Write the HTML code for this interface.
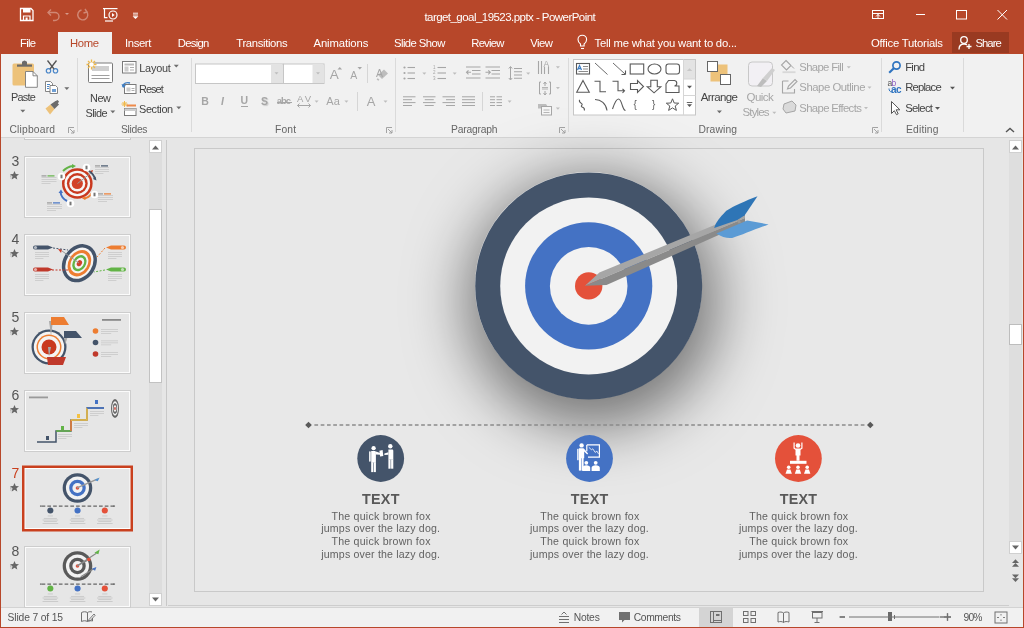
<!DOCTYPE html><html><head><meta charset="utf-8"><style>
html,body{margin:0;padding:0;width:1024px;height:628px;overflow:hidden;background:#E6E6E6;position:relative}
.t{position:absolute;white-space:nowrap;line-height:1;font-family:"Liberation Sans",sans-serif}
.r{position:absolute}
svg{position:absolute;overflow:visible}
</style></head><body>
<div class="r" style="left:0px;top:0px;width:1024px;height:54px;background:#B7472A;"></div>
<div class="r" style="left:0px;top:54px;width:1024px;height:83px;background:#F1F1F1;"></div>
<div class="r" style="left:0px;top:138px;width:167px;height:469px;background:#E6E6E6;"></div>
<div class="r" style="left:167px;top:138px;width:857px;height:469px;background:#E6E6E6;"></div>
<div class="r" style="left:0px;top:137px;width:1024px;height:1px;background:#D4D4D4;"></div>
<div class="r" style="left:0px;top:608px;width:1024px;height:20px;background:#F1F1F1;"></div>
<div class="r" style="left:0px;top:607px;width:1024px;height:1px;background:#D3D3D3;"></div>
<div class="r" style="left:168px;top:605px;width:841px;height:1px;background:#CDCDCD;"></div>
<div class="r" style="left:58px;top:32px;width:54px;height:22px;background:#F1F1F1;"></div>
<svg width="167" height="606" style="left:0;top:0"><rect x="24" y="138" width="107" height="2" fill="#C9C9C9"/><rect x="25" y="138" width="105" height="1" fill="#FAFAFA"/><rect x="24" y="156" width="107" height="62" fill="#CDCDCD"/><rect x="25" y="157" width="105" height="60" fill="#FBFBFB"/><rect x="26" y="158" width="103" height="58" fill="#E6E6E6"/><g transform="translate(24 156)"><circle cx="53.3" cy="27.5" r="15.3" fill="#C9391F"/><circle cx="53.3" cy="27.5" r="12.8" fill="#F6F6F6"/><circle cx="53.3" cy="27.5" r="10.4" fill="#C9391F"/><circle cx="53.3" cy="27.5" r="8" fill="#F6F6F6"/><circle cx="53.3" cy="27.5" r="5.6" fill="#D2432A"/><path d="M53.5 27.5L67 17" stroke="#999" stroke-width="1"/><path d="M66 15l3-1-1 3z" fill="#C9391F"/><path d="M39 15c3-3 6-4.5 10-5" stroke="#62B346" stroke-width="2" fill="none"/><path d="M48 8l4 2-4 2.5z" fill="#62B346"/><path d="M65 15c3 2 5 4 6 8" stroke="#44546A" stroke-width="2" fill="none"/><path d="M69 23l3.5 1.5-1-4z" fill="#44546A"/><path d="M68 37c-2 3-4 5-8 5.5" stroke="#ED7D31" stroke-width="2" fill="none"/><path d="M61 40l-3 2.5 3.5 1.5z" fill="#ED7D31"/><path d="M43 45c-4-2-6-5-6.5-9" stroke="#4472C4" stroke-width="2" fill="none"/><path d="M34.5 37l2.5-3.5 2 3.5z" fill="#4472C4"/><circle cx="37.5" cy="20.5" r="3.8" fill="#FFFFFF"/><rect x="36.5" y="18.7" width="2" height="3.6" fill="#777"/><circle cx="62.5" cy="11.5" r="3.8" fill="#FFFFFF"/><rect x="61.5" y="9.7" width="2" height="3.6" fill="#777"/><circle cx="70.5" cy="38.5" r="3.8" fill="#FFFFFF"/><rect x="69.5" y="36.7" width="2" height="3.6" fill="#777"/><circle cx="46.5" cy="47.5" r="3.8" fill="#FFFFFF"/><rect x="45.5" y="45.7" width="2" height="3.6" fill="#777"/><rect x="17.5" y="21" width="15" height="0.75" fill="#C6C6C6"/><rect x="17.5" y="23" width="15" height="0.75" fill="#C6C6C6"/><rect x="17.5" y="25" width="15" height="0.75" fill="#C6C6C6"/><rect x="17.5" y="27" width="9.0" height="0.75" fill="#C6C6C6"/><rect x="71" y="11" width="14" height="0.75" fill="#C6C6C6"/><rect x="71" y="13" width="14" height="0.75" fill="#C6C6C6"/><rect x="71" y="15" width="14" height="0.75" fill="#C6C6C6"/><rect x="71" y="17" width="8.4" height="0.75" fill="#C6C6C6"/><rect x="74" y="39" width="15" height="0.75" fill="#C6C6C6"/><rect x="74" y="41" width="15" height="0.75" fill="#C6C6C6"/><rect x="74" y="43" width="15" height="0.75" fill="#C6C6C6"/><rect x="74" y="45" width="9.0" height="0.75" fill="#C6C6C6"/><rect x="23" y="48" width="15" height="0.75" fill="#C6C6C6"/><rect x="23" y="50" width="15" height="0.75" fill="#C6C6C6"/><rect x="23" y="52" width="15" height="0.75" fill="#C6C6C6"/><rect x="23" y="54" width="9.0" height="0.75" fill="#C6C6C6"/><rect x="17.5" y="19.3" width="5" height="1.2" fill="#999"/><rect x="23.5" y="19.3" width="7" height="1.2" fill="#62B346"/><rect x="71" y="9.3" width="5" height="1.2" fill="#999"/><rect x="77" y="9.3" width="7" height="1.2" fill="#44546A"/><rect x="74" y="37.3" width="5" height="1.2" fill="#999"/><rect x="80" y="37.3" width="7" height="1.2" fill="#ED7D31"/><rect x="23" y="46.3" width="5" height="1.2" fill="#999"/><rect x="29" y="46.3" width="7" height="1.2" fill="#4472C4"/></g><rect x="24" y="234" width="107" height="62" fill="#CDCDCD"/><rect x="25" y="235" width="105" height="60" fill="#FBFBFB"/><rect x="26" y="236" width="103" height="58" fill="#E6E6E6"/><g transform="translate(24 234)"><g transform="rotate(-58 55.4 29.2)"><ellipse cx="55.4" cy="29.2" rx="20" ry="16.5" fill="#44546A"/><ellipse cx="55.4" cy="29.2" rx="16.5" ry="13" fill="#F4F4F4"/><ellipse cx="55.4" cy="29.2" rx="14" ry="10.8" fill="#ED7D31"/><ellipse cx="55.4" cy="29.2" rx="10.8" ry="8.2" fill="#F4F4F4"/><ellipse cx="55.4" cy="29.2" rx="8.6" ry="6.5" fill="#62B346"/><ellipse cx="55.4" cy="29.2" rx="6" ry="4.3" fill="#F4F4F4"/><ellipse cx="55.4" cy="29.2" rx="3.2" ry="2.4" fill="#D0402B"/></g><path d="M55 29L38 17" stroke="#999" stroke-width="1"/><path d="M34 15l4 0.5-1 3.5z" fill="#D0402B"/><path d="M11 11.5h13l5 2-5 2h-13a2 2 0 0 1 0-4z" fill="#44546A"/><circle cx="11.5" cy="13.5" r="1.6" fill="#fff" opacity="0.6"/><rect x="11" y="18.0" width="14" height="0.75" fill="#C6C6C6"/><rect x="11" y="20.0" width="14" height="0.75" fill="#C6C6C6"/><rect x="11" y="22.0" width="14" height="0.75" fill="#C6C6C6"/><rect x="11" y="24.0" width="8.4" height="0.75" fill="#C6C6C6"/><path d="M11 33.5h13l5 2-5 2h-13a2 2 0 0 1 0-4z" fill="#C0392B"/><circle cx="11.5" cy="35.5" r="1.6" fill="#fff" opacity="0.6"/><rect x="11" y="40.0" width="14" height="0.75" fill="#C6C6C6"/><rect x="11" y="42.0" width="14" height="0.75" fill="#C6C6C6"/><rect x="11" y="44.0" width="14" height="0.75" fill="#C6C6C6"/><rect x="11" y="46.0" width="8.4" height="0.75" fill="#C6C6C6"/><path d="M100 11.5h-13l-5 2 5 2h13a2 2 0 0 0 0-4z" fill="#ED7D31"/><circle cx="98.5" cy="13.5" r="1.6" fill="#fff" opacity="0.6"/><rect x="84" y="18.0" width="14" height="0.75" fill="#C6C6C6"/><rect x="84" y="20.0" width="14" height="0.75" fill="#C6C6C6"/><rect x="84" y="22.0" width="14" height="0.75" fill="#C6C6C6"/><rect x="84" y="24.0" width="8.4" height="0.75" fill="#C6C6C6"/><path d="M100 33.5h-13l-5 2 5 2h13a2 2 0 0 0 0-4z" fill="#62B346"/><circle cx="98.5" cy="35.5" r="1.6" fill="#fff" opacity="0.6"/><rect x="84" y="40.0" width="14" height="0.75" fill="#C6C6C6"/><rect x="84" y="42.0" width="14" height="0.75" fill="#C6C6C6"/><rect x="84" y="44.0" width="14" height="0.75" fill="#C6C6C6"/><rect x="84" y="46.0" width="8.4" height="0.75" fill="#C6C6C6"/><path d="M29 14L44 16" stroke="#44546A" stroke-width="1" stroke-dasharray="2 1.5"/><path d="M28 36L44 36" stroke="#C0392B" stroke-width="1" stroke-dasharray="2 1.5"/><path d="M81 14L73 23" stroke="#ED7D31" stroke-width="1" stroke-dasharray="2 1.5"/><path d="M81 36L70 38" stroke="#62B346" stroke-width="1" stroke-dasharray="2 1.5"/></g><rect x="24" y="312" width="107" height="62" fill="#CDCDCD"/><rect x="25" y="313" width="105" height="60" fill="#FBFBFB"/><rect x="26" y="314" width="103" height="58" fill="#E6E6E6"/><g transform="translate(24 312)"><circle cx="25" cy="35" r="17.5" fill="#44546A"/><circle cx="25" cy="35" r="15.2" fill="#F4F4F4"/><circle cx="25" cy="35" r="12.5" fill="#ED7D31"/><circle cx="25" cy="35" r="11" fill="#F4F4F4"/><circle cx="25" cy="35" r="7.5" fill="#C9391F"/><path d="M25 9L27 24 29 9z" fill="#A8A8A8"/><path d="M40 24L41 33 44 24z" fill="#A8A8A8"/><path d="M24 35L25 45 27 35z" fill="#A8A8A8"/><path d="M27 5h13l5 8h-18z" fill="#ED7D31"/><path d="M40 19h12l6 7h-18z" fill="#44546A"/><path d="M23 45h19l-3 8h-15z" fill="#C0392B"/><rect x="78" y="7" width="19" height="1.8" fill="#8A8A8A"/><circle cx="71.5" cy="19.0" r="2.8" fill="#ED7D31"/><rect x="77" y="17.0" width="17" height="0.75" fill="#C6C6C6"/><rect x="77" y="19.0" width="17" height="0.75" fill="#C6C6C6"/><rect x="77" y="21.0" width="10.2" height="0.75" fill="#C6C6C6"/><circle cx="71.5" cy="30.5" r="2.8" fill="#44546A"/><rect x="77" y="28.5" width="17" height="0.75" fill="#C6C6C6"/><rect x="77" y="30.5" width="17" height="0.75" fill="#C6C6C6"/><rect x="77" y="32.5" width="10.2" height="0.75" fill="#C6C6C6"/><circle cx="71.5" cy="42.0" r="2.8" fill="#C0392B"/><rect x="77" y="40.0" width="17" height="0.75" fill="#C6C6C6"/><rect x="77" y="42.0" width="17" height="0.75" fill="#C6C6C6"/><rect x="77" y="44.0" width="10.2" height="0.75" fill="#C6C6C6"/></g><rect x="24" y="390" width="107" height="62" fill="#CDCDCD"/><rect x="25" y="391" width="105" height="60" fill="#FBFBFB"/><rect x="26" y="392" width="103" height="58" fill="#E6E6E6"/><g transform="translate(24 390)"><rect x="5" y="6.5" width="19" height="1.8" fill="#9A9A9A"/><path d="M13 52H32V41H47V30H63V18H80" fill="none" stroke="#44546A" stroke-width="1.5"/><path d="M32 41H47" stroke="#62B346" stroke-width="1.5"/><path d="M47 41V30" stroke="#ED7D31" stroke-width="1.5"/><path d="M47 30H63V18" stroke="#F4C142" stroke-width="1.5" fill="none"/><path d="M63 18H80" stroke="#4472C4" stroke-width="1.5"/><ellipse cx="91" cy="18.5" rx="4.0" ry="9.5" fill="#666"/><ellipse cx="91" cy="18.5" rx="3.04" ry="7.22" fill="#F4F4F4"/><ellipse cx="91" cy="18.5" rx="2.2399999999999998" ry="5.319999999999999" fill="#666"/><ellipse cx="91" cy="18.5" rx="1.36" ry="3.23" fill="#F4F4F4"/><ellipse cx="91" cy="18.5" rx="0.7200000000000001" ry="1.71" fill="#C0392B"/><rect x="22" y="46" width="3" height="4" fill="#44546A"/><rect x="37" y="36" width="3" height="4" fill="#62B346"/><rect x="53" y="24" width="3" height="4" fill="#F4C142"/><rect x="71" y="10" width="3" height="4" fill="#4472C4"/><rect x="34" y="44" width="14" height="0.75" fill="#C6C6C6"/><rect x="34" y="46" width="14" height="0.75" fill="#C6C6C6"/><rect x="34" y="48" width="8.4" height="0.75" fill="#C6C6C6"/><rect x="50" y="33" width="14" height="0.75" fill="#C6C6C6"/><rect x="50" y="35" width="14" height="0.75" fill="#C6C6C6"/><rect x="50" y="37" width="8.4" height="0.75" fill="#C6C6C6"/><rect x="66" y="21" width="14" height="0.75" fill="#C6C6C6"/><rect x="66" y="23" width="14" height="0.75" fill="#C6C6C6"/><rect x="66" y="25" width="8.4" height="0.75" fill="#C6C6C6"/></g><rect x="22" y="465.5" width="111" height="66" fill="#C9401E"/><rect x="24.5" y="468" width="106" height="61" fill="#FFFFFF"/><rect x="25.5" y="469" width="104" height="59" fill="#E6E6E6"/><g transform="translate(26 470) scale(0.13037974683544304)"><circle cx="394.7" cy="137.9" r="113.5" fill="#44546A"/><circle cx="394.7" cy="137.9" r="88.5" fill="#F2F2F2"/><circle cx="394.7" cy="137.9" r="63.6" fill="#4472C4"/><circle cx="394.7" cy="137.9" r="38.8" fill="#F2F2F2"/><circle cx="394.7" cy="137.9" r="13.7" fill="#E4513A"/><path d="M391 137.8L551 68" stroke="#999" stroke-width="10"/><path d="M525 77l40-20-15 30z" fill="#4E8FD0"/><path d="M120 277H675" stroke="#666" stroke-width="8" stroke-dasharray="28 16"/><path d="M114 271l8 6-8 6-8-6z" fill="#555"/><path d="M676 271l8 6-8 6-8-6z" fill="#555"/><circle cx="186.7" cy="310.5" r="23.4" fill="#44546A"/><rect x="166.7" y="350" width="40" height="5" fill="#BDBDBD"/><rect x="136.7" y="368" width="100" height="5" fill="#BDBDBD"/><rect x="126.69999999999999" y="381" width="120" height="5" fill="#BDBDBD"/><rect x="136.7" y="394" width="100" height="5" fill="#BDBDBD"/><rect x="126.69999999999999" y="407" width="120" height="5" fill="#BDBDBD"/><circle cx="395.5" cy="310.5" r="23.4" fill="#4472C4"/><rect x="375.5" y="350" width="40" height="5" fill="#BDBDBD"/><rect x="345.5" y="368" width="100" height="5" fill="#BDBDBD"/><rect x="335.5" y="381" width="120" height="5" fill="#BDBDBD"/><rect x="345.5" y="394" width="100" height="5" fill="#BDBDBD"/><rect x="335.5" y="407" width="120" height="5" fill="#BDBDBD"/><circle cx="604.4" cy="310.5" r="23.4" fill="#E4513A"/><rect x="584.4" y="350" width="40" height="5" fill="#BDBDBD"/><rect x="554.4" y="368" width="100" height="5" fill="#BDBDBD"/><rect x="544.4" y="381" width="120" height="5" fill="#BDBDBD"/><rect x="554.4" y="394" width="100" height="5" fill="#BDBDBD"/><rect x="544.4" y="407" width="120" height="5" fill="#BDBDBD"/></g><rect x="24" y="546" width="107" height="62" fill="#CDCDCD"/><rect x="25" y="547" width="105" height="60" fill="#FBFBFB"/><rect x="26" y="548" width="103" height="58" fill="#E6E6E6"/><g transform="translate(26 548) scale(0.13037974683544304)"><circle cx="394.7" cy="137.9" r="113.5" fill="#595959"/><circle cx="394.7" cy="137.9" r="88.5" fill="#F2F2F2"/><circle cx="394.7" cy="137.9" r="63.6" fill="#595959"/><circle cx="394.7" cy="137.9" r="38.8" fill="#F2F2F2"/><circle cx="394.7" cy="137.9" r="13.7" fill="#E4513A"/><path d="M391 137.8L540 40" stroke="#888" stroke-width="9"/><path d="M525 37l40-25-10 35z" fill="#62B346"/><path d="M391 137.8L470 95" stroke="#888" stroke-width="9"/><circle cx="482" cy="88" r="14" fill="#E4513A"/><path d="M420 220L520 160" stroke="#888" stroke-width="9"/><path d="M505 160l35-15-10 30z" fill="#4472C4"/><path d="M120 277H675" stroke="#666" stroke-width="8" stroke-dasharray="28 16"/><path d="M114 271l8 6-8 6-8-6z" fill="#555"/><path d="M676 271l8 6-8 6-8-6z" fill="#555"/><circle cx="186.7" cy="310.5" r="23.4" fill="#62B346"/><rect x="166.7" y="350" width="40" height="5" fill="#BDBDBD"/><rect x="136.7" y="368" width="100" height="5" fill="#BDBDBD"/><rect x="126.69999999999999" y="381" width="120" height="5" fill="#BDBDBD"/><rect x="136.7" y="394" width="100" height="5" fill="#BDBDBD"/><rect x="126.69999999999999" y="407" width="120" height="5" fill="#BDBDBD"/><circle cx="395.5" cy="310.5" r="23.4" fill="#4472C4"/><rect x="375.5" y="350" width="40" height="5" fill="#BDBDBD"/><rect x="345.5" y="368" width="100" height="5" fill="#BDBDBD"/><rect x="335.5" y="381" width="120" height="5" fill="#BDBDBD"/><rect x="345.5" y="394" width="100" height="5" fill="#BDBDBD"/><rect x="335.5" y="407" width="120" height="5" fill="#BDBDBD"/><circle cx="604.4" cy="310.5" r="23.4" fill="#E4513A"/><rect x="584.4" y="350" width="40" height="5" fill="#BDBDBD"/><rect x="554.4" y="368" width="100" height="5" fill="#BDBDBD"/><rect x="544.4" y="381" width="120" height="5" fill="#BDBDBD"/><rect x="554.4" y="394" width="100" height="5" fill="#BDBDBD"/><rect x="544.4" y="407" width="120" height="5" fill="#BDBDBD"/></g></svg>
<div class="r" style="left:149px;top:140px;width:13px;height:465px;background:#DDDDDD;"></div>
<div class="r" style="left:149px;top:140px;width:13px;height:13px;background:#FFFFFF;border:1px solid #D0D0D0;box-sizing:border-box"></div>
<div class="r" style="left:149px;top:209px;width:13px;height:174px;background:#FFFFFF;border:1px solid #C2C2C2;box-sizing:border-box"></div>
<div class="r" style="left:149px;top:593px;width:13px;height:13px;background:#FFFFFF;border:1px solid #D0D0D0;box-sizing:border-box"></div>
<div class="r" style="left:166px;top:140px;width:1px;height:466px;background:#C8C8C8;"></div>
<div class="r" style="left:194px;top:148px;width:788px;height:442px;background:#E8E8E8;border:1px solid #C9C9C9"></div>
<div class="r" style="left:475px;top:172px;width:227px;height:227px;border-radius:50%;box-shadow:4px 16px 60px 12px rgba(0,0,0,0.5)"></div>
<svg width="1024" height="628" style="left:0;top:0"><circle cx="588.7" cy="285.9" r="113.5" fill="#44546A"/><circle cx="588.7" cy="285.9" r="88.5" fill="#F2F2F2"/><circle cx="588.7" cy="285.9" r="63.6" fill="#4472C4"/><circle cx="588.7" cy="285.9" r="38.8" fill="#F2F2F2"/><circle cx="588.7" cy="285.9" r="13.7" fill="#E4513A"/><path d="M585 285.8 L599.4 272.5 L745 212.5 L745 218 Z" fill="#A6A6A6"/><path d="M585 285.8 L745 218 L745 223.3 L606.5 285 Z" fill="#8A8A8A"/><path d="M714.2 227.9 C716 222 719 218.3 726.3 210.7 C734 206 745 201 757.5 196.3 L744.7 215.2 L737.4 219.9 Z" fill="#2E75B6"/><path d="M716.4 233.5 C722 237 727 238.5 732.2 237.9 C742 235 755 229 768.6 224.4 L747.1 220.4 Z" fill="#5B9BD5"/><path d="M737 220.2 L739.5 219.3 L741 222.5 L738.5 223.6 Z" fill="#9A9A9A"/><path d="M314.4 425H866" stroke="#8A8A8A" stroke-width="1.6" stroke-dasharray="3.7 2.58"/><path d="M308.5 421.7l3.3 3.3-3.3 3.3-3.3-3.3z" fill="#595959"/><path d="M870.3 421.7l3.3 3.3-3.3 3.3-3.3-3.3z" fill="#595959"/><circle cx="380.7" cy="458.5" r="23.4" fill="#44546A"/><circle cx="589.5" cy="458.5" r="23.4" fill="#4472C4"/><circle cx="798.4" cy="458.5" r="23.4" fill="#E4513A"/><g transform="translate(357 435)" fill="#fff"><circle cx="16.6" cy="13.2" r="2.15"/><rect x="12.1" y="16.2" width="1.6" height="10.5" rx="0.7"/><path d="M14.2 16h3.2c1 0 1.5 .5 1.5 1.3V27.5h-4.7z"/><rect x="14.2" y="27.2" width="2.1" height="9.9"/><rect x="16.8" y="27.2" width="2.1" height="9.9"/><path d="M18.9 16.4l4.3 1.6v1.7l-4.3 -.3z"/><path d="M22.4 15.7l3.2-.6.7 5.9-3.2.6z"/><circle cx="33.3" cy="11.2" r="2.2"/><path d="M31.4 14.6h3.6c.8 0 1.3 .5 1.3 1.3v8.6h-4.9z"/><rect x="31.4" y="24.3" width="2.2" height="9.4"/><rect x="34.1" y="24.3" width="2.2" height="9.4"/><path d="M31.4 17.2l-4 1.2v1.7l4 -.3z"/></g><g transform="translate(566 435)" fill="#fff"><circle cx="15.6" cy="10.4" r="2.2"/><path d="M12.8 13.3h4.2c.8 0 1.2 .4 1.5 1l3.6 4.3-.9 .8-3-2.8v6.7h-5.2v-8.8z"/><rect x="11.2" y="13.8" width="1.4" height="11.5" rx="0.6"/><rect x="12.9" y="22.8" width="2.1" height="12.8"/><rect x="15.5" y="22.8" width="2.1" height="12.8"/><path d="M20.8 9.9h12.6v12.3h-11.4" fill="none" stroke="#fff" stroke-width="1.2"/><path d="M20.8 9.9v6.3" fill="none" stroke="#fff" stroke-width="1.2"/><path d="M22.8 12.3l2.6 2.4 1.4-.9 2.4 3.6 1.7-1.3 1.6 2.8" fill="none" stroke="#fff" stroke-width="0.8"/><circle cx="20.3" cy="27.8" r="1.9"/><path d="M16.4 36v-3.2c0-1.5 1.6-2.5 3.9-2.5s3.9 1 3.9 2.5V36z"/><circle cx="29.7" cy="27.8" r="1.9"/><path d="M25.6 36v-3.2c0-1.5 1.7-2.5 4.1-2.5s4.1 1 4.1 2.5V36z"/></g><g transform="translate(775 435)" fill="#fff"><circle cx="23" cy="10.5" r="2.3"/><path d="M20.5 13.5h5v7h-1v5.2h-3v-5.2h-1z"/><path d="M18.5 7.5h1.2v5.5l1.5 1-0.6 1-2.1-1.5z"/><path d="M27.5 7.5h-1.2v5.5l-1.5 1 0.6 1 2.1-1.5z"/><rect x="15" y="25.8" width="16.5" height="3"/><circle cx="13.7" cy="32.3" r="1.8"/><path d="M10.5 38.8l1.5-4.2h3.4l1.5 4.2z"/><circle cx="23" cy="32.3" r="1.8"/><path d="M19.8 38.8l1.5-4.2h3.4l1.5 4.2z"/><circle cx="32.2" cy="32.3" r="1.8"/><path d="M29 38.8l1.5-4.2h3.4l1.5 4.2z"/></g></svg>
<div class="r" style="left:952px;top:32px;width:57px;height:21px;background:#993A21;"></div>
<div class="r" style="left:77px;top:58px;width:1px;height:74px;background:#DADADA;"></div>
<div class="r" style="left:191px;top:58px;width:1px;height:74px;background:#DADADA;"></div>
<div class="r" style="left:395px;top:58px;width:1px;height:74px;background:#DADADA;"></div>
<div class="r" style="left:568px;top:58px;width:1px;height:74px;background:#DADADA;"></div>
<div class="r" style="left:881px;top:58px;width:1px;height:74px;background:#DADADA;"></div>
<div class="r" style="left:963px;top:58px;width:1px;height:74px;background:#DADADA;"></div>
<div class="r" style="left:699px;top:607px;width:34px;height:20px;background:#D4D4D4;"></div>
<div class="r" style="left:887.8px;top:612px;width:3.8px;height:9.4px;background:#6A6A6A;"></div>
<div class="r" style="left:1009px;top:140px;width:13px;height:465px;background:#DEDEDE;"></div>
<div class="r" style="left:1009px;top:140px;width:13px;height:13px;background:#FFFFFF;border:1px solid #D0D0D0;box-sizing:border-box"></div>
<div class="r" style="left:1009px;top:324px;width:13px;height:21px;background:#FFFFFF;border:1px solid #BDBDBD;box-sizing:border-box"></div>
<div class="r" style="left:1009px;top:541px;width:13px;height:13px;background:#FFFFFF;border:1px solid #D0D0D0;box-sizing:border-box"></div>
<div class="r" style="left:1009px;top:554px;width:13px;height:51px;background:#E6E6E6;"></div>
<div class="r" style="left:0px;top:54px;width:1px;height:574px;background:#B7472A;"></div>
<div class="r" style="left:1023px;top:54px;width:1px;height:574px;background:#B7472A;"></div>
<div class="r" style="left:0px;top:627px;width:1024px;height:1px;background:#B7472A;"></div>
<div class="r" style="left:367px;top:64px;width:1px;height:19px;background:#D6D6D6;"></div>
<div class="r" style="left:240.5px;top:106px;width:7.5px;height:1px;background:#A6A6A6;"></div>
<div class="r" style="left:276.5px;top:101.5px;width:15px;height:1px;background:#A6A6A6;"></div>
<div class="r" style="left:357px;top:91.5px;width:1px;height:19px;background:#D6D6D6;"></div>
<div class="r" style="left:482px;top:91.7px;width:1px;height:19px;background:#D6D6D6;"></div><svg width="1024" height="628" style="left:0;top:0"><path d="M14.5 171l1.3 3 3.2.2-2.5 2.1.8 3.1-2.8-1.7-2.8 1.7.8-3.1-2.5-2.1 3.2-.2z" fill="#666"/>
<path d="M10 176h1.5M10.5 178h1" stroke="#888" stroke-width="0.8"/>
<path d="M14.5 249l1.3 3 3.2.2-2.5 2.1.8 3.1-2.8-1.7-2.8 1.7.8-3.1-2.5-2.1 3.2-.2z" fill="#666"/>
<path d="M10 254h1.5M10.5 256h1" stroke="#888" stroke-width="0.8"/>
<path d="M14.5 327l1.3 3 3.2.2-2.5 2.1.8 3.1-2.8-1.7-2.8 1.7.8-3.1-2.5-2.1 3.2-.2z" fill="#666"/>
<path d="M10 332h1.5M10.5 334h1" stroke="#888" stroke-width="0.8"/>
<path d="M14.5 405l1.3 3 3.2.2-2.5 2.1.8 3.1-2.8-1.7-2.8 1.7.8-3.1-2.5-2.1 3.2-.2z" fill="#666"/>
<path d="M10 410h1.5M10.5 412h1" stroke="#888" stroke-width="0.8"/>
<path d="M14.5 483l1.3 3 3.2.2-2.5 2.1.8 3.1-2.8-1.7-2.8 1.7.8-3.1-2.5-2.1 3.2-.2z" fill="#666"/>
<path d="M10 488h1.5M10.5 490h1" stroke="#888" stroke-width="0.8"/>
<path d="M14.5 561l1.3 3 3.2.2-2.5 2.1.8 3.1-2.8-1.7-2.8 1.7.8-3.1-2.5-2.1 3.2-.2z" fill="#666"/>
<path d="M10 566h1.5M10.5 568h1" stroke="#888" stroke-width="0.8"/>
<path d="M152 149.5h7l-3.5-4z" fill="#666"/><path d="M152 597.5h7l-3.5 4z" fill="#666"/>
<path d="M81.5 612.5c2-1 4-1 6 0v9c-2-1-4-1-6 0z" fill="none" stroke="#707070" stroke-width="1"/><path d="M87.5 612.5c1.5-1 3-1 4.5-.5M87.5 621.5c1.5-1 3-1 5-.5v-3" fill="none" stroke="#707070" stroke-width="1"/><path d="M89 619.5l5-5.5 1.2 1.2-5 5.5-1.7.5z" fill="none" stroke="#707070" stroke-width="0.9"/>
<path d="M559 616.5h10M559 619.5h10M559 622.5h10" stroke="#707070" stroke-width="1"/><path d="M561.5 614.5l2.5-2.5 2.5 2.5" fill="none" stroke="#707070" stroke-width="1"/>
<path d="M619 612h11v8h-5.5l-2.5 2.5v-2.5h-3z" fill="#707070"/>
<rect x="710.5" y="611.5" width="11" height="11" fill="none" stroke="#707070" stroke-width="1"/><path d="M713.5 611.5v11M713.5 620.5h8" stroke="#707070" stroke-width="1"/><rect x="716" y="614" width="3.5" height="2" fill="#707070"/>
<g fill="none" stroke="#707070" stroke-width="1"><rect x="743.5" y="611.5" width="4.5" height="4"/><rect x="751" y="611.5" width="4.5" height="4"/><rect x="743.5" y="618.5" width="4.5" height="4"/><rect x="751" y="618.5" width="4.5" height="4"/></g>
<g fill="none" stroke="#707070" stroke-width="1"><path d="M778 612.5c2-.7 4-.7 5.5.5 1.5-1.2 3.5-1.2 5.5-.5v9.5c-2-.7-4-.7-5.5.5-1.5-1.2-3.5-1.2-5.5-.5z"/><path d="M783.5 613v9.5"/></g>
<g fill="none" stroke="#707070" stroke-width="1"><path d="M811.5 611.5h11.5"/><rect x="812.5" y="612.5" width="9.5" height="5.5"/><path d="M817 618v4.5M814.5 622.5h5"/></g>
<path d="M840 617h5M849 617h90.5M894.5 615v4M944 617h7M947.5 613.5v7" stroke="#707070" stroke-width="1"/>
<path d="M940 617h11" stroke="#707070" stroke-width="1.4"/><path d="M947.5 613.2v7.6" stroke="#707070" stroke-width="1.4"/><path d="M839.5 617h5.5" stroke="#707070" stroke-width="1.4"/>
<rect x="995" y="612" width="12" height="11" fill="none" stroke="#707070" stroke-width="1"/><path d="M997 617.5h2M1003 617.5h2M1001 614v1.5M1001 619.5v1.5" stroke="#707070" stroke-width="0.9"/>
<path d="M1012 149.5h7l-3.5-4z" fill="#666"/><path d="M1012 545.5h7l-3.5 4z" fill="#666"/>
<path d="M1012 563h7l-3.5-3.8z" fill="#666"/><path d="M1012 566.8h7l-3.5-3.8z" fill="#666"/>
<path d="M1012 574.5h7l-3.5 3.8z" fill="#666"/><path d="M1012 578.2h7l-3.5 3.8z" fill="#666"/>
<path d="M20.5 8.5h10.5l2 2v10h-12.5z" fill="none" stroke="#fff" stroke-width="1.3"/>
<rect x="23" y="9" width="7.5" height="3.5" fill="#fff"/>
<path d="M23.5 20.5v-4.5h6.5v4.5" fill="none" stroke="#fff" stroke-width="1.2"/><rect x="25.6" y="17.5" width="2" height="2.5" fill="#fff"/>
<g opacity="0.35" stroke="#fff" stroke-width="1.4" fill="none"><path d="M48 12.5h7a4 4 0 0 1 0 8h-2"/><path d="M51 9.5l-3 3 3 3"/></g>
<path d="M65 13h4l-2 2z" fill="#fff" opacity="0.45"/>
<g opacity="0.35" stroke="#fff" stroke-width="1.4" fill="none"><path d="M86.5 11.5a5 5 0 1 1 -5 -1.5"/><path d="M85 9l2 3-3.5 1"/></g>
<g stroke="#fff" fill="none" stroke-width="1.2"><path d="M103 8.6h14.5"/><path d="M104.5 8.6v9h3"/><circle cx="113" cy="15" r="4"/><path d="M105 21h8"/></g>
<path d="M112 13l2.6 2-2.6 2z" fill="#fff"/>
<path d="M133 13.2h5M133 15h5" stroke="#fff" stroke-width="0.9"/><path d="M132.6 16.3h5.8l-2.9 2.7z" fill="#fff"/>
<g stroke="#fff" fill="none" stroke-width="1"><rect x="872.5" y="10.5" width="11" height="8"/><path d="M872.5 13.5h11M878 13.5v5"/><path d="M916 14.5h9"/><rect x="956.5" y="10.5" width="10" height="8.5"/><path d="M997.5 10l9.5 9.5M1007 10l-9.5 9.5"/></g>
<path d="M876 16.5l2-2 2 2" stroke="#fff" fill="none" stroke-width="1"/>
<g stroke="#fff" fill="none" stroke-width="1.3"><circle cx="964" cy="40" r="3.3"/><path d="M959 49.5c0-4 2-5.5 5-5.5 1.3 0 2.3.3 3 .8"/><path d="M966.5 46.5h5M969 44v5"/></g>
<g stroke="#fff" fill="none" stroke-width="1.1"><path d="M580.5 46v-2c-1.5-1-2.5-2.5-2.5-4.5a4.3 4.3 0 0 1 8.6 0c0 2-1 3.5-2.5 4.5v2z"/><path d="M581 48.5h3"/></g>
<rect x="12.5" y="63.5" width="21.5" height="22" rx="1.5" fill="#EDC27A"/>
<path d="M17 64.5h15v2.2h-15z" fill="#6B6B6B"/><path d="M22 61.5h5v3.5h-5z" fill="#6B6B6B"/><circle cx="24.5" cy="62" r="1.6" fill="#6B6B6B"/>
<path d="M25.5 71.5h7.5l4.3 4.3v11.5h-11.8z" fill="#fff" stroke="#7A7A7A" stroke-width="0.9"/><path d="M33 71.5v4.3h4.3" fill="none" stroke="#7A7A7A" stroke-width="0.9"/>
<path d="M20.3 109.8h5l-2.5 2.75z" fill="#6E6E6E"/>
<g fill="none" stroke="#4A86C8" stroke-width="1.2"><circle cx="48.5" cy="70.8" r="2.2"/><circle cx="55.5" cy="70.8" r="2.2"/></g>
<path d="M47.5 60.5l6.5 8.5M56.5 60.5l-6.5 8.5" stroke="#555" stroke-width="1.3"/>
<path d="M45.5 81.5h5l2 2v8h-7z" fill="#fff" stroke="#777" stroke-width="0.9"/><path d="M50 85.5h5.5l2 2v6h-7.5z" fill="#fff" stroke="#777" stroke-width="0.9"/>
<path d="M47 84.5h3M47 86.5h2M47 88.5h2" stroke="#4A86C8" stroke-width="1"/><rect x="52" y="89" width="4" height="3" fill="#4A86C8" opacity="0.8"/>
<path d="M64.3 87.3h5l-2.5 2.75z" fill="#6E6E6E"/>
<path d="M45.5 108.5l5-4 4 4.5-4.5 5.5z" fill="#EDC27A"/><path d="M50.5 104.5l5-3.5 3.5 3.5-4.5 4.5z" fill="#6B6B6B"/><path d="M55 101.5l2.5-1.5 1.5 1.5-1.5 2.5z" fill="#6B6B6B"/>
<rect x="88.5" y="63" width="24" height="19.5" rx="1" fill="#fff" stroke="#7A7A7A" stroke-width="1"/>
<rect x="92" y="66" width="17" height="5" fill="#CFCFCF"/><path d="M91.5 75.5h18M91.5 78.5h18" stroke="#888" stroke-width="0.8"/>
<g stroke="#F0B94A" stroke-width="1.3"><path d="M91.5 59.5v10M86.5 64.5h10M88 61l7 7M95 61l-7 7"/></g><circle cx="91.5" cy="64.5" r="2.2" fill="#fff"/>
<path d="M110.3 110.39999999999999h5l-2.5 2.75z" fill="#6E6E6E"/>
<rect x="122.5" y="61.5" width="13.5" height="11.5" fill="#fff" stroke="#7A7A7A" stroke-width="1"/><rect x="124.5" y="63.5" width="9.5" height="2" fill="#bbb"/><rect x="124.5" y="66.5" width="4" height="5" fill="#ccc"/><path d="M130 67.5h4M130 70h4" stroke="#999" stroke-width="0.8"/>
<path d="M173.8 64.8h5l-2.5 2.75z" fill="#6E6E6E"/>
<rect x="124.5" y="84.5" width="11.5" height="9" fill="#fff" stroke="#7A7A7A" stroke-width="1"/><rect x="126.5" y="87.5" width="4" height="4" fill="#ccc"/><path d="M131.5 88.5h3M131.5 90.5h3" stroke="#999" stroke-width="0.8"/>
<path d="M122.5 86.5c1-3 4-4.5 7.5-3.5" stroke="#3F7FC4" stroke-width="1.4" fill="none"/><path d="M121.5 84l1.5 4 3-2.5z" fill="#3F7FC4"/>
<rect x="127" y="104.5" width="9" height="2" fill="#EE8A4A"/><path d="M127 104.5v2" stroke="#EE8A4A"/><rect x="124.5" y="108.5" width="11.5" height="7" fill="#fff" stroke="#7A7A7A" stroke-width="1"/><rect x="124.5" y="108.5" width="11.5" height="2.5" fill="#ccc"/>
<g stroke="#F0B94A" stroke-width="1"><path d="M124.5 101v6M121.5 104h6M122.5 102l4 4M126.5 102l-4 4"/></g>
<path d="M176.3 106.6h5l-2.5 2.75z" fill="#6E6E6E"/>
<rect x="195.5" y="64" width="87.5" height="19.5" fill="#fff" stroke="#C6C6C6" stroke-width="1"/>
<rect x="271" y="64.5" width="11.5" height="18.5" fill="#E3E3E3"/>
<rect x="283.5" y="64" width="40.5" height="19.5" fill="#fff" stroke="#C6C6C6" stroke-width="1"/>
<rect x="312.5" y="64.5" width="11" height="18.5" fill="#E3E3E3"/>
<path d="M274.5 72.3h4l-2.0 2.2z" fill="#BDBDBD"/>
<path d="M316.0 72.3h4l-2.0 2.2z" fill="#BDBDBD"/>
<path d="M337.5 69.5l2.3-2.5 2.3 2.5z" fill="#A6A6A6"/>
<path d="M357.5 67h4.5l-2.2 2.5z" fill="#A6A6A6"/>
<path d="M378 75l6-5.5 4 4-6 5.5z" fill="#BDBDBD"/><path d="M377 79l2 1" stroke="#BDBDBD" stroke-width="1.5"/>
<path d="M297.5 105.5h13M299.5 103.5l-2 2 2 2M308.5 103.5l2 2-2 2" stroke="#A6A6A6" fill="none" stroke-width="1"/>
<path d="M314.6 100.6h4l-2.0 2.2z" fill="#BDBDBD"/>
<path d="M344.4 100.6h4l-2.0 2.2z" fill="#BDBDBD"/>
<path d="M383.5 100.6h4l-2.0 2.2z" fill="#BDBDBD"/>
<circle cx="404.5" cy="67.5" r="1.1" fill="#A6A6A6"/>
<path d="M407.5 67.5h7.5" stroke="#A6A6A6" stroke-width="1.1"/>
<circle cx="404.5" cy="73.0" r="1.1" fill="#A6A6A6"/>
<path d="M407.5 73.0h7.5" stroke="#A6A6A6" stroke-width="1.1"/>
<circle cx="404.5" cy="78.5" r="1.1" fill="#A6A6A6"/>
<path d="M407.5 78.5h7.5" stroke="#A6A6A6" stroke-width="1.1"/>
<path d="M422.3 72.6h4l-2.0 2.2z" fill="#BDBDBD"/>
<path d="M437.5 67.5h8.5" stroke="#A6A6A6" stroke-width="1.1"/>
<path d="M437.5 73.0h8.5" stroke="#A6A6A6" stroke-width="1.1"/>
<path d="M437.5 78.5h8.5" stroke="#A6A6A6" stroke-width="1.1"/>
<path d="M452.7 72.6h4l-2.0 2.2z" fill="#BDBDBD"/>
<path d="M466 67h14.5M472 70.5h8.5M472 74h8.5M466 78h14.5" stroke="#A6A6A6" stroke-width="1.1"/><path d="M466.5 72.3h4.5M468.5 70.3l-2 2 2 2" stroke="#A6A6A6" fill="none" stroke-width="1.1"/>
<path d="M485.5 67h14.5M491.5 70.5h8.5M491.5 74h8.5M485.5 78h14.5" stroke="#A6A6A6" stroke-width="1.1"/><path d="M485.5 72.3h4.5M488.3 70.3l2 2-2 2" stroke="#A6A6A6" fill="none" stroke-width="1.1"/>
<path d="M514 68.5h8M514 71.8h8M514 75h8M514 78.2h8" stroke="#A6A6A6" stroke-width="1.1"/><path d="M510.5 67v12.5M508.8 68.5l1.7-2 1.7 2M508.8 78l1.7 2 1.7-2" stroke="#A6A6A6" fill="none" stroke-width="1"/>
<path d="M526.2 72.6h4l-2.0 2.2z" fill="#BDBDBD"/>
<path d="M403 96.8h12.5" stroke="#A6A6A6" stroke-width="1"/>
<path d="M403 99.7h9" stroke="#A6A6A6" stroke-width="1"/>
<path d="M403 102.6h12.5" stroke="#A6A6A6" stroke-width="1"/>
<path d="M403 105.5h9" stroke="#A6A6A6" stroke-width="1"/>
<path d="M423.0 96.8h12.5" stroke="#A6A6A6" stroke-width="1"/>
<path d="M424.75 99.7h9" stroke="#A6A6A6" stroke-width="1"/>
<path d="M423.0 102.6h12.5" stroke="#A6A6A6" stroke-width="1"/>
<path d="M424.75 105.5h9" stroke="#A6A6A6" stroke-width="1"/>
<path d="M442.5 96.8h12.5" stroke="#A6A6A6" stroke-width="1"/>
<path d="M446.0 99.7h9" stroke="#A6A6A6" stroke-width="1"/>
<path d="M442.5 102.6h12.5" stroke="#A6A6A6" stroke-width="1"/>
<path d="M446.0 105.5h9" stroke="#A6A6A6" stroke-width="1"/>
<path d="M462 96.8h13" stroke="#A6A6A6" stroke-width="1"/>
<path d="M462 99.7h13" stroke="#A6A6A6" stroke-width="1"/>
<path d="M462 102.6h13" stroke="#A6A6A6" stroke-width="1"/>
<path d="M462 105.5h13" stroke="#A6A6A6" stroke-width="1"/>
<path d="M490 96.8h5M496.5 96.8h5.5" stroke="#A6A6A6" stroke-width="1"/>
<path d="M490 99.7h5M496.5 99.7h5.5" stroke="#A6A6A6" stroke-width="1"/>
<path d="M490 102.6h5M496.5 102.6h5.5" stroke="#A6A6A6" stroke-width="1"/>
<path d="M490 105.5h5M496.5 105.5h5.5" stroke="#A6A6A6" stroke-width="1"/>
<path d="M507.6 100.6h4l-2.0 2.2z" fill="#BDBDBD"/>
<path d="M538.5 61v13M541.5 61v13M544.5 67v7M548.5 67v7" stroke="#A6A6A6" stroke-width="1.1"/>
<path d="M555.9 66.3h4l-2.0 2.2z" fill="#BDBDBD"/>
<path d="M539.5 82v12h1.5M539.5 82h1.5M550.5 82v12h-1.5M550.5 82h-1.5" stroke="#A6A6A6" fill="none" stroke-width="1"/><path d="M542 87.5h6M542 89h6" stroke="#A6A6A6" stroke-width="0.8"/><path d="M545 82v4M543.5 84l1.5-2 1.5 2M545 95v-4M543.5 93l1.5 2 1.5-2" stroke="#A6A6A6" fill="none" stroke-width="1"/>
<path d="M555.9 87.1h4l-2.0 2.2z" fill="#BDBDBD"/>
<path d="M538 104h8l3 4.5h-11z" fill="#BDBDBD"/><rect x="541.5" y="106.5" width="10" height="8.5" fill="#F6F6F6" stroke="#A6A6A6" stroke-width="1"/><path d="M543.5 110h6M543.5 112.5h6" stroke="#A6A6A6" stroke-width="0.8"/>
<path d="M555.9 107.5h4l-2.0 2.2z" fill="#BDBDBD"/>
<rect x="573.5" y="59.5" width="122" height="55.5" fill="#fff" stroke="#C6C6C6" stroke-width="1"/>
<rect x="683.5" y="60" width="11.5" height="19" fill="#E3E3E3"/><path d="M683.5 59.5v55.5M683.5 79h12M683.5 95.5h12" stroke="#D6D6D6" stroke-width="1"/>
<path d="M686.8 71h5.5l-2.75-2.8z" fill="#C8C8C8"/>
<path d="M687.0 85.8h5l-2.5 2.75z" fill="#555"/>
<path d="M686.8 102.5h5.5" stroke="#555" stroke-width="0.9"/>
<path d="M687.0 104.3h5l-2.5 2.75z" fill="#555"/>
<rect x="576.5" y="63.5" width="13" height="10.5" fill="#fff" stroke="#5A5A5A" stroke-width="1.1"/><path d="M583 66.5h5M583 69h5M578.5 71.5h9.5" stroke="#5A5A5A" stroke-width="0.7"/>
<path d="M577.5 70l2-4.5 2 4.5M578.2 68.6h2.6" stroke="#3F7FC4" fill="none" stroke-width="1.2"/>
<path d="M595 63l12.5 11.5" stroke="#5A5A5A" stroke-width="0.9"/>
<path d="M613 63l12 11" stroke="#5A5A5A" stroke-width="0.9"/><path d="M625.5 74.5v-4M625.5 74.5h-4" stroke="#5A5A5A" stroke-width="1.1" fill="none"/>
<rect x="630.2" y="64" width="13.5" height="10" fill="none" stroke="#5A5A5A" stroke-width="1.1"/>
<ellipse cx="654.5" cy="69" rx="6.5" ry="5" fill="none" stroke="#5A5A5A" stroke-width="1.1"/>
<rect x="666" y="64" width="13.5" height="10" rx="2.5" fill="none" stroke="#5A5A5A" stroke-width="1.1"/>
<path d="M583 80.5l6.3 11.8h-12.6z" fill="none" stroke="#5A5A5A" stroke-width="1.1"/>
<path d="M594.5 81.3h5.5v10.5h6" fill="none" stroke="#5A5A5A" stroke-width="1.1"/>
<path d="M612.5 81.3h5.5v9.5h6.5M622.5 88.8l2 2-2 2" fill="none" stroke="#5A5A5A" stroke-width="1.1"/>
<path d="M630.5 83.5h7v-3l6 6-6 6v-3h-7z" fill="none" stroke="#5A5A5A" stroke-width="1.1"/>
<path d="M650.8 80.3h6.5v6.5h3.5l-6.75 6-6.75-6h3.5z" fill="none" stroke="#5A5A5A" stroke-width="1.1"/>
<path d="M666 84l2.5-3.5h6a2.8 2.8 0 0 1 0 5.5h4.5v6.5h-13z" fill="none" stroke="#5A5A5A" stroke-width="1.1"/>
<path d="M580 100c-2 1 1 3 2 4s-2 2 0 3 3 1 2.3 3.5" fill="none" stroke="#5A5A5A" stroke-width="1.1"/>
<path d="M595 99.5c6 0 11 4 12 11" fill="none" stroke="#5A5A5A" stroke-width="1.1"/>
<path d="M612.5 109c2-6 4-10 6-10s3 4 4 7 2 4.5 3 4.5" fill="none" stroke="#5A5A5A" stroke-width="1.1"/>
<path d="M672.5 98.8l1.7 4.2 4.5.2-3.5 2.8 1.2 4.4-3.9-2.5-3.9 2.5 1.2-4.4-3.5-2.8 4.5-.2z" fill="none" stroke="#5A5A5A" stroke-width="1"/>
<rect x="710.5" y="64.5" width="17" height="17" fill="#EDC27A"/>
<rect x="707.5" y="61.5" width="10" height="10" fill="#fff" stroke="#666" stroke-width="1"/>
<rect x="720.5" y="74.5" width="10" height="10" fill="#fff" stroke="#666" stroke-width="1"/>
<path d="M716.9 110.5h5l-2.5 2.75z" fill="#6E6E6E"/>
<rect x="748.5" y="62" width="24" height="24" rx="3.5" fill="#F2F0F4" stroke="#C8C8C8" stroke-width="1"/>
<path d="M757 86l6-8 4 3-6 6z" fill="#BDBDBD"/><path d="M763 78l9-10 3 2-8 11z" fill="#CFCFCF"/>
<path d="M772.3 111.8h4l-2.0 2.2z" fill="#BDBDBD"/>
<path d="M786 60.5l5 5-4.5 4.5-5-5z" fill="none" stroke="#A6A6A6" stroke-width="1.1"/><path d="M791.5 66l2.5 2.5" stroke="#A6A6A6"/><rect x="782.5" y="71.3" width="13" height="1.8" fill="#D8D8D8"/>
<path d="M846.8 66.3h4l-2.0 2.2z" fill="#BDBDBD"/>
<path d="M782.5 81v12h12v-4M782.5 81h6" fill="none" stroke="#A6A6A6" stroke-width="1.1"/><path d="M787.5 89l1-3 6.5-6.5 2 2-6.5 6.5z" fill="none" stroke="#A6A6A6" stroke-width="1.1"/>
<path d="M867.5 86.6h4l-2.0 2.2z" fill="#BDBDBD"/>
<path d="M784 104l8-3 4 4-1 6-9 2-3-4z" fill="#DADADA" stroke="#A6A6A6" stroke-width="1"/>
<path d="M864.0 107.1h4l-2.0 2.2z" fill="#BDBDBD"/>
<circle cx="896.5" cy="65.5" r="3.6" fill="none" stroke="#2F74C0" stroke-width="1.7"/><path d="M893.8 68.3l-4.6 4.4" stroke="#2F74C0" stroke-width="2.2"/>
<path d="M889 88.5c0 2 1 3.5 3 3.5" fill="none" stroke="#2F74C0" stroke-width="1"/>
<path d="M950.0 86.8h5l-2.5 2.75z" fill="#555"/>
<path d="M891.5 101.5v12l2.8-2.8 2.2 4 1.7-.9-2.1-4h3.8z" fill="#fff" stroke="#555" stroke-width="1"/>
<path d="M935.0 107.1h5l-2.5 2.75z" fill="#555"/>
<path d="M68.5 133v-5.5h5.5" fill="none" stroke="#9A9A9A" stroke-width="0.9"/><path d="M70 129l4 4M74 130v3h-3" fill="none" stroke="#9A9A9A" stroke-width="0.9"/>
<path d="M386.5 133v-5.5h5.5" fill="none" stroke="#9A9A9A" stroke-width="0.9"/><path d="M388 129l4 4M392 130v3h-3" fill="none" stroke="#9A9A9A" stroke-width="0.9"/>
<path d="M559.5 133v-5.5h5.5" fill="none" stroke="#9A9A9A" stroke-width="0.9"/><path d="M561 129l4 4M565 130v3h-3" fill="none" stroke="#9A9A9A" stroke-width="0.9"/>
<path d="M872.5 133v-5.5h5.5" fill="none" stroke="#9A9A9A" stroke-width="0.9"/><path d="M874 129l4 4M878 130v3h-3" fill="none" stroke="#9A9A9A" stroke-width="0.9"/>
<path d="M1006 132l4-3.5 4 3.5" fill="none" stroke="#555" stroke-width="1.4"/></svg>
<div style="position:absolute;left:0;top:0;width:1024px;height:628px;will-change:transform"><div class="t" style="left:11.50px;top:154.35px;font-size:14px;letter-spacing:0.000px;color:#555;font-weight:normal;">3</div>
<div class="t" style="left:11.50px;top:232.35px;font-size:14px;letter-spacing:0.000px;color:#555;font-weight:normal;">4</div>
<div class="t" style="left:11.50px;top:310.35px;font-size:14px;letter-spacing:0.000px;color:#555;font-weight:normal;">5</div>
<div class="t" style="left:11.50px;top:388.35px;font-size:14px;letter-spacing:0.000px;color:#555;font-weight:normal;">6</div>
<div class="t" style="left:11.50px;top:466.35px;font-size:14px;letter-spacing:0.000px;color:#C9401E;font-weight:normal;">7</div>
<div class="t" style="left:11.50px;top:544.35px;font-size:14px;letter-spacing:0.000px;color:#555;font-weight:normal;">8</div>
<div class="t" style="left:362.00px;top:491.80px;font-size:14.3px;letter-spacing:0.285px;color:#595959;font-weight:bold;">TEXT</div>
<div class="t" style="left:331.50px;top:510.63px;font-size:10.6px;letter-spacing:0.231px;color:#626262;font-weight:normal;">The quick brown fox</div>
<div class="t" style="left:321.30px;top:523.23px;font-size:10.6px;letter-spacing:0.166px;color:#626262;font-weight:normal;">jumps over the lazy dog.</div>
<div class="t" style="left:331.50px;top:535.93px;font-size:10.6px;letter-spacing:0.231px;color:#626262;font-weight:normal;">The quick brown fox</div>
<div class="t" style="left:321.30px;top:548.63px;font-size:10.6px;letter-spacing:0.166px;color:#626262;font-weight:normal;">jumps over the lazy dog.</div>
<div class="t" style="left:570.80px;top:491.80px;font-size:14.3px;letter-spacing:0.285px;color:#595959;font-weight:bold;">TEXT</div>
<div class="t" style="left:540.30px;top:510.63px;font-size:10.6px;letter-spacing:0.231px;color:#626262;font-weight:normal;">The quick brown fox</div>
<div class="t" style="left:530.10px;top:523.23px;font-size:10.6px;letter-spacing:0.166px;color:#626262;font-weight:normal;">jumps over the lazy dog.</div>
<div class="t" style="left:540.30px;top:535.93px;font-size:10.6px;letter-spacing:0.231px;color:#626262;font-weight:normal;">The quick brown fox</div>
<div class="t" style="left:530.10px;top:548.63px;font-size:10.6px;letter-spacing:0.166px;color:#626262;font-weight:normal;">jumps over the lazy dog.</div>
<div class="t" style="left:779.70px;top:491.80px;font-size:14.3px;letter-spacing:0.285px;color:#595959;font-weight:bold;">TEXT</div>
<div class="t" style="left:749.20px;top:510.63px;font-size:10.6px;letter-spacing:0.231px;color:#626262;font-weight:normal;">The quick brown fox</div>
<div class="t" style="left:739.00px;top:523.23px;font-size:10.6px;letter-spacing:0.166px;color:#626262;font-weight:normal;">jumps over the lazy dog.</div>
<div class="t" style="left:749.20px;top:535.93px;font-size:10.6px;letter-spacing:0.231px;color:#626262;font-weight:normal;">The quick brown fox</div>
<div class="t" style="left:739.00px;top:548.63px;font-size:10.6px;letter-spacing:0.166px;color:#626262;font-weight:normal;">jumps over the lazy dog.</div>
<div class="t" style="left:424.40px;top:11.77px;font-size:11.5px;letter-spacing:-0.546px;color:#FFFFFF;font-weight:normal;">target_goal_19523.pptx - PowerPoint</div>
<div class="t" style="left:20.00px;top:37.93px;font-size:11.3px;letter-spacing:-0.736px;color:#FFFFFF;font-weight:normal;">File</div>
<div class="t" style="left:125.00px;top:37.93px;font-size:11.3px;letter-spacing:-0.392px;color:#FFFFFF;font-weight:normal;">Insert</div>
<div class="t" style="left:177.70px;top:37.93px;font-size:11.3px;letter-spacing:-0.695px;color:#FFFFFF;font-weight:normal;">Design</div>
<div class="t" style="left:236.30px;top:37.93px;font-size:11.3px;letter-spacing:-0.354px;color:#FFFFFF;font-weight:normal;">Transitions</div>
<div class="t" style="left:313.50px;top:37.93px;font-size:11.3px;letter-spacing:-0.122px;color:#FFFFFF;font-weight:normal;">Animations</div>
<div class="t" style="left:394.10px;top:37.93px;font-size:11.3px;letter-spacing:-0.592px;color:#FFFFFF;font-weight:normal;">Slide Show</div>
<div class="t" style="left:471.30px;top:37.93px;font-size:11.3px;letter-spacing:-0.810px;color:#FFFFFF;font-weight:normal;">Review</div>
<div class="t" style="left:530.30px;top:37.93px;font-size:11.3px;letter-spacing:-0.563px;color:#FFFFFF;font-weight:normal;">View</div>
<div class="t" style="left:594.50px;top:37.93px;font-size:11.3px;letter-spacing:-0.219px;color:#FFFFFF;font-weight:normal;">Tell me what you want to do...</div>
<div class="t" style="left:871.00px;top:37.93px;font-size:11.3px;letter-spacing:-0.210px;color:#FFFFFF;font-weight:normal;">Office Tutorials</div>
<div class="t" style="left:70.00px;top:37.93px;font-size:11.3px;letter-spacing:-0.380px;color:#B7472A;font-weight:normal;">Home</div>
<div class="t" style="left:975.50px;top:37.93px;font-size:11.3px;letter-spacing:-0.988px;color:#FFFFFF;font-weight:normal;">Share</div>
<div class="t" style="left:9.50px;top:125.48px;font-size:10.3px;letter-spacing:0.177px;color:#666666;font-weight:normal;">Clipboard</div>
<div class="t" style="left:121.00px;top:125.48px;font-size:10.3px;letter-spacing:-0.311px;color:#666666;font-weight:normal;">Slides</div>
<div class="t" style="left:275.00px;top:125.48px;font-size:10.3px;letter-spacing:0.131px;color:#666666;font-weight:normal;">Font</div>
<div class="t" style="left:451.00px;top:125.48px;font-size:10.3px;letter-spacing:-0.200px;color:#666666;font-weight:normal;">Paragraph</div>
<div class="t" style="left:698.50px;top:125.48px;font-size:10.3px;letter-spacing:0.120px;color:#666666;font-weight:normal;">Drawing</div>
<div class="t" style="left:906.00px;top:125.48px;font-size:10.3px;letter-spacing:0.168px;color:#666666;font-weight:normal;">Editing</div>
<div class="t" style="left:7.60px;top:612.68px;font-size:10.3px;letter-spacing:-0.155px;color:#555;font-weight:normal;">Slide 7 of 15</div>
<div class="t" style="left:573.70px;top:612.68px;font-size:10.3px;letter-spacing:-0.201px;color:#555;font-weight:normal;">Notes</div>
<div class="t" style="left:633.70px;top:612.68px;font-size:10.3px;letter-spacing:-0.356px;color:#555;font-weight:normal;">Comments</div>
<div class="t" style="left:963.50px;top:612.68px;font-size:10.3px;letter-spacing:-0.807px;color:#555;font-weight:normal;">90%</div>
<div class="t" style="left:11.00px;top:92.47px;font-size:10.9px;letter-spacing:-0.768px;color:#444;font-weight:normal;">Paste</div>
<div class="t" style="left:90.00px;top:92.57px;font-size:10.9px;letter-spacing:-0.403px;color:#444;font-weight:normal;">New</div>
<div class="t" style="left:85.60px;top:107.67px;font-size:10.9px;letter-spacing:-0.584px;color:#444;font-weight:normal;">Slide</div>
<div class="t" style="left:139.20px;top:63.27px;font-size:10.9px;letter-spacing:-0.205px;color:#444;font-weight:normal;">Layout</div>
<div class="t" style="left:139.00px;top:83.77px;font-size:10.9px;letter-spacing:-0.918px;color:#444;font-weight:normal;">Reset</div>
<div class="t" style="left:139.00px;top:104.27px;font-size:10.9px;letter-spacing:-0.359px;color:#444;font-weight:normal;">Section</div>
<div class="t" style="left:329.80px;top:67.77px;font-size:13.5px;letter-spacing:0.000px;color:#A6A6A6;font-weight:normal;">A</div>
<div class="t" style="left:350.30px;top:70.11px;font-size:10.5px;letter-spacing:0.000px;color:#A6A6A6;font-weight:normal;">A</div>
<div class="t" style="left:376.00px;top:68.11px;font-size:10.5px;letter-spacing:0.000px;color:#A6A6A6;font-weight:normal;">A</div>
<div class="t" style="left:201.30px;top:95.61px;font-size:10.5px;letter-spacing:0.000px;color:#A6A6A6;font-weight:bold;">B</div>
<div class="t" style="left:221.00px;top:95.61px;font-size:10.5px;letter-spacing:0.000px;color:#A6A6A6;font-weight:bold;font-style:italic">I</div>
<div class="t" style="left:240.50px;top:94.61px;font-size:10.5px;letter-spacing:0.000px;color:#A6A6A6;font-weight:bold;">U</div>
<div class="t" style="left:261.00px;top:95.61px;font-size:10.5px;letter-spacing:0.000px;color:#A6A6A6;font-weight:bold;text-shadow:1px 1px 1px #ccc">S</div>
<div class="t" style="left:276.80px;top:96.46px;font-size:9.5px;letter-spacing:-1.084px;color:#A6A6A6;font-weight:bold;">abc</div>
<div class="t" style="left:297.00px;top:93.96px;font-size:9.5px;letter-spacing:2.031px;color:#A6A6A6;font-weight:normal;">AV</div>
<div class="t" style="left:326.30px;top:95.69px;font-size:11px;letter-spacing:0.046px;color:#A6A6A6;font-weight:normal;">Aa</div>
<div class="t" style="left:366.70px;top:94.60px;font-size:13px;letter-spacing:0.000px;color:#A6A6A6;font-weight:normal;">A</div>
<div class="t" style="left:433.00px;top:65.99px;font-size:4.5px;letter-spacing:0.000px;color:#A6A6A6;font-weight:normal;">1</div>
<div class="t" style="left:433.00px;top:71.49px;font-size:4.5px;letter-spacing:0.000px;color:#A6A6A6;font-weight:normal;">2</div>
<div class="t" style="left:433.00px;top:76.99px;font-size:4.5px;letter-spacing:0.000px;color:#A6A6A6;font-weight:normal;">3</div>
<div class="t" style="left:543.50px;top:59.80px;font-size:8.5px;letter-spacing:0.000px;color:#A6A6A6;font-weight:normal;">A</div>
<div class="t" style="left:633.50px;top:100.03px;font-size:10px;letter-spacing:0.000px;color:#5A5A5A;font-weight:normal;">{</div>
<div class="t" style="left:652.00px;top:100.03px;font-size:10px;letter-spacing:0.000px;color:#5A5A5A;font-weight:normal;">}</div>
<div class="t" style="left:700.70px;top:91.77px;font-size:11.5px;letter-spacing:-0.618px;color:#444;font-weight:normal;">Arrange</div>
<div class="t" style="left:746.50px;top:91.77px;font-size:11.5px;letter-spacing:-0.549px;color:#A6A6A6;font-weight:normal;">Quick</div>
<div class="t" style="left:742.60px;top:107.27px;font-size:11.5px;letter-spacing:-0.903px;color:#A6A6A6;font-weight:normal;">Styles</div>
<div class="t" style="left:799.30px;top:61.63px;font-size:11.3px;letter-spacing:-0.650px;color:#A6A6A6;font-weight:normal;">Shape Fill</div>
<div class="t" style="left:799.30px;top:82.03px;font-size:11.3px;letter-spacing:-0.451px;color:#A6A6A6;font-weight:normal;">Shape Outline</div>
<div class="t" style="left:799.30px;top:102.63px;font-size:11.3px;letter-spacing:-0.637px;color:#A6A6A6;font-weight:normal;">Shape Effects</div>
<div class="t" style="left:905.20px;top:61.63px;font-size:11.3px;letter-spacing:-0.727px;color:#444;font-weight:normal;">Find</div>
<div class="t" style="left:887.50px;top:79.10px;font-size:8.5px;letter-spacing:0.000px;color:#555;font-weight:normal;">a</div>
<div class="t" style="left:891.50px;top:79.10px;font-size:8.5px;letter-spacing:0.000px;color:#8B5FC2;font-weight:normal;">b</div>
<div class="t" style="left:891.00px;top:85.03px;font-size:10px;letter-spacing:-0.622px;color:#2F74C0;font-weight:bold;">ac</div>
<div class="t" style="left:905.20px;top:82.03px;font-size:11.3px;letter-spacing:-0.826px;color:#444;font-weight:normal;">Replace</div>
<div class="t" style="left:905.20px;top:102.63px;font-size:11.3px;letter-spacing:-0.721px;color:#444;font-weight:normal;">Select</div></div>
</body></html>
